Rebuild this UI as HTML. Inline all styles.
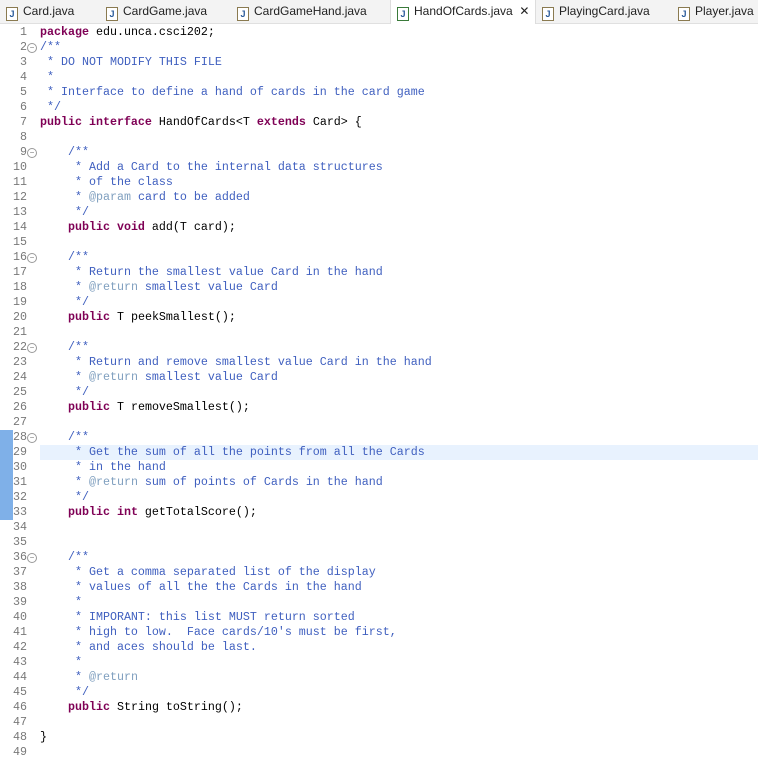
<!DOCTYPE html>
<html><head><style>
body{margin:0;width:758px;height:768px;background:#fff;overflow:hidden;position:relative;font-family:"Liberation Sans",sans-serif}
.tabs{position:absolute;left:0;top:0;width:758px;height:23px;background:#f3f3f3;border-bottom:1px solid #e0e0e0}
.tab{position:absolute;top:0;height:23px;font-size:12px;line-height:23px;color:#222;white-space:nowrap}
.ic{display:inline-block;width:10px;height:12px;border:1px solid #8a7a50;background:#fff;vertical-align:-2px;margin-right:5px;position:relative;font:bold 9px/12px "Liberation Sans";color:#2a5a9a;text-align:center}
.act{background:#fff;border-left:1px solid #ddd;border-right:1px solid #ddd;height:24px}
.code{position:absolute;left:0;top:25px;width:758px;font-family:"Liberation Mono",monospace;font-size:11.67px;line-height:15px}
.ln{position:absolute;left:0;width:27px;text-align:right;color:#787878;font-family:"Liberation Mono",monospace;font-size:11.67px;line-height:15px}
.row{height:15px;padding-left:40px;color:#000;white-space:pre}
.k{color:#7f0055;font-weight:bold}.c{color:#3f5fbf}.t{color:#7f9fbf}
.hl{background:#e8f2fe}
.mk{position:absolute;left:0;top:430px;width:13px;height:90px;background:#7fb0e8}
.fold{position:absolute;left:27px;width:8px;height:8px;border:1px solid #999;border-radius:50%;font-size:8px;line-height:8px;text-align:center;color:#777}
</style></head><body>
<div class="tabs">
<div class="tab" style="left:6px"><span class="ic">J</span>Card.java</div>
<div class="tab" style="left:106px"><span class="ic">J</span>CardGame.java</div>
<div class="tab" style="left:237px"><span class="ic">J</span>CardGameHand.java</div>
<div class="tab act" style="left:390px;width:146px;padding-left:6px;box-sizing:border-box"><span class="ic" style="border-color:#3a7a3a">J</span>HandOfCards.java&nbsp;&nbsp;✕</div>
<div class="tab" style="left:542px"><span class="ic">J</span>PlayingCard.java</div>
<div class="tab" style="left:678px"><span class="ic">J</span>Player.java</div>
</div>
<div class="mk"></div>
<div class="hl" style="position:absolute;left:40px;top:445px;width:718px;height:15px"></div>
<div class="ln" style="top:25px">1<br>2<br>3<br>4<br>5<br>6<br>7<br>8<br>9<br>10<br>11<br>12<br>13<br>14<br>15<br>16<br>17<br>18<br>19<br>20<br>21<br>22<br>23<br>24<br>25<br>26<br>27<br>28<br>29<br>30<br>31<br>32<br>33<br>34<br>35<br>36<br>37<br>38<br>39<br>40<br>41<br>42<br>43<br>44<br>45<br>46<br>47<br>48<br>49</div>
<div class="code">
<div class="row"><span class="k">package</span> edu.unca.csci202;</div>
<div class="row c">/**</div>
<div class="row c"> * DO NOT MODIFY THIS FILE</div>
<div class="row c"> *</div>
<div class="row c"> * Interface to define a hand of cards in the card game</div>
<div class="row c"> */</div>
<div class="row"><span class="k">public interface</span> HandOfCards&lt;T <span class="k">extends</span> Card&gt; {</div>
<div class="row"></div>
<div class="row c">    /**</div>
<div class="row c">     * Add a Card to the internal data structures</div>
<div class="row c">     * of the class</div>
<div class="row c">     * <span class="t">@param</span> card to be added</div>
<div class="row c">     */</div>
<div class="row">    <span class="k">public void</span> add(T card);</div>
<div class="row"></div>
<div class="row c">    /**</div>
<div class="row c">     * Return the smallest value Card in the hand</div>
<div class="row c">     * <span class="t">@return</span> smallest value Card</div>
<div class="row c">     */</div>
<div class="row">    <span class="k">public</span> T peekSmallest();</div>
<div class="row"></div>
<div class="row c">    /**</div>
<div class="row c">     * Return and remove smallest value Card in the hand</div>
<div class="row c">     * <span class="t">@return</span> smallest value Card</div>
<div class="row c">     */</div>
<div class="row">    <span class="k">public</span> T removeSmallest();</div>
<div class="row"></div>
<div class="row c">    /**</div>
<div class="row c">     * Get the sum of all the points from all the Cards</div>
<div class="row c">     * in the hand</div>
<div class="row c">     * <span class="t">@return</span> sum of points of Cards in the hand</div>
<div class="row c">     */</div>
<div class="row">    <span class="k">public int</span> getTotalScore();</div>
<div class="row"></div>
<div class="row"></div>
<div class="row c">    /**</div>
<div class="row c">     * Get a comma separated list of the display</div>
<div class="row c">     * values of all the the Cards in the hand</div>
<div class="row c">     *</div>
<div class="row c">     * IMPORANT: this list MUST return sorted</div>
<div class="row c">     * high to low.  Face cards/10's must be first,</div>
<div class="row c">     * and aces should be last.</div>
<div class="row c">     *</div>
<div class="row c">     * <span class="t">@return</span></div>
<div class="row c">     */</div>
<div class="row">    <span class="k">public</span> String toString();</div>
<div class="row"></div>
<div class="row">}</div>
<div class="row"></div>
</div>
<div class="fold" style="top:43px">−</div>
<div class="fold" style="top:148px">−</div>
<div class="fold" style="top:253px">−</div>
<div class="fold" style="top:343px">−</div>
<div class="fold" style="top:433px">−</div>
<div class="fold" style="top:553px">−</div>
</body></html>
